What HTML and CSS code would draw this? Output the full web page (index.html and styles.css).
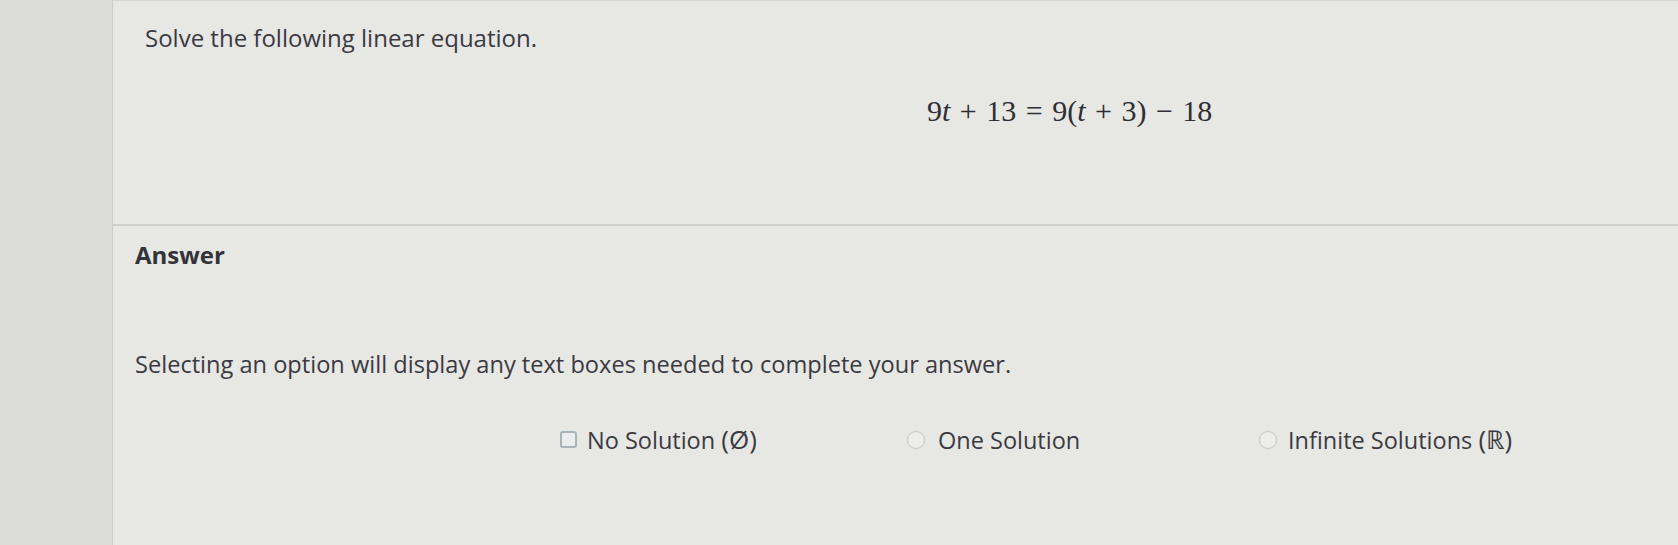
FILE: index.html
```html
<!DOCTYPE html>
<html>
<head>
<meta charset="utf-8">
<link rel="stylesheet" href="styles.css">
</head>
<body>
<div class="page">
  <aside class="sidebar"></aside>
  <main class="content">
    <section class="question">
      <p class="prompt">Solve the following linear equation.</p>
      <div class="equation">9<i>t</i> + 13 = 9(<i>t</i> + 3) − 18</div>
    </section>
    <section class="answer">
      <h2 class="answer-title">Answer</h2>
      <p class="hint">Selecting an option will display any text boxes needed to complete your answer.</p>
      <div class="options">
        <label class="option"><span class="box"></span><span class="label-text">No Solution <span class="sym">(Ø)</span></span></label>
        <label class="option"><span class="radio"></span><span class="label-text">One Solution</span></label>
        <label class="option opt-inf"><span class="radio"></span><span class="label-text">Infinite Solutions <span class="sym">(ℝ)</span></span></label>
      </div>
    </section>
  </main>
</div>
</body>
</html>
```

FILE: styles.css
```css
html, body {
  margin: 0;
  padding: 0;
  height: 100%;
}
body {
  background: #e7e7e4;
  font-family: "Open Sans", "Noto Sans", sans-serif;
  color: #3a3a42;
  overflow: hidden;
}
.page {
  display: flex;
  width: 1678px;
  height: 545px;
}
.sidebar {
  width: 112px;
  flex: none;
  background: #dbdbd9;
  border-right: 1px solid #cdcdcb;
}
.content {
  flex: 1;
  display: flex;
  flex-direction: column;
  border-top: 1px solid #d6d6d4;
}
.question {
  height: 225px;
  flex: none;
  border-bottom: 2px solid #cfcfcd;
  box-sizing: border-box;
  padding: 21px 0 0 32px;
}
.prompt {
  margin: 0;
  font-size: 24px;
  line-height: 32px;
}
.equation {
  margin: 40px 0 0 782px;
  font-family: "Liberation Serif", "DejaVu Serif", serif;
  font-size: 30px;
  line-height: 34px;
  color: #2e2e34;
  word-spacing: 2px;
}
.equation i {
  font-style: italic;
}
.answer {
  padding: 13px 0 0 22px;
}
.answer-title {
  margin: 0;
  font-size: 24px;
  font-weight: 700;
  line-height: 32px;
  color: #33333a;
}
.hint {
  margin: 77px 0 0 0;
  font-size: 23.6px;
  line-height: 32px;
}
.options {
  display: grid;
  grid-template-columns: 347px 352px auto;
  align-items: center;
  margin-top: 43px;
  padding-left: 425px;
  font-size: 23.5px;
  line-height: 32px;
}
.option {
  display: flex;
  align-items: center;
  gap: 13px;
}
.option:first-child {
  gap: 10px;
}
.opt-inf {
  gap: 11px;
}
.box {
  width: 13px;
  height: 13px;
  border: 2px solid #a9b4b8;
  border-radius: 3px;
  background: #eaeded;
}
.radio {
  width: 16px;
  height: 16px;
  border: 1px solid #c6c6c4;
  border-radius: 50%;
  background: #ededeb;
}
.sym {
  font-size: 26px;
}
```
